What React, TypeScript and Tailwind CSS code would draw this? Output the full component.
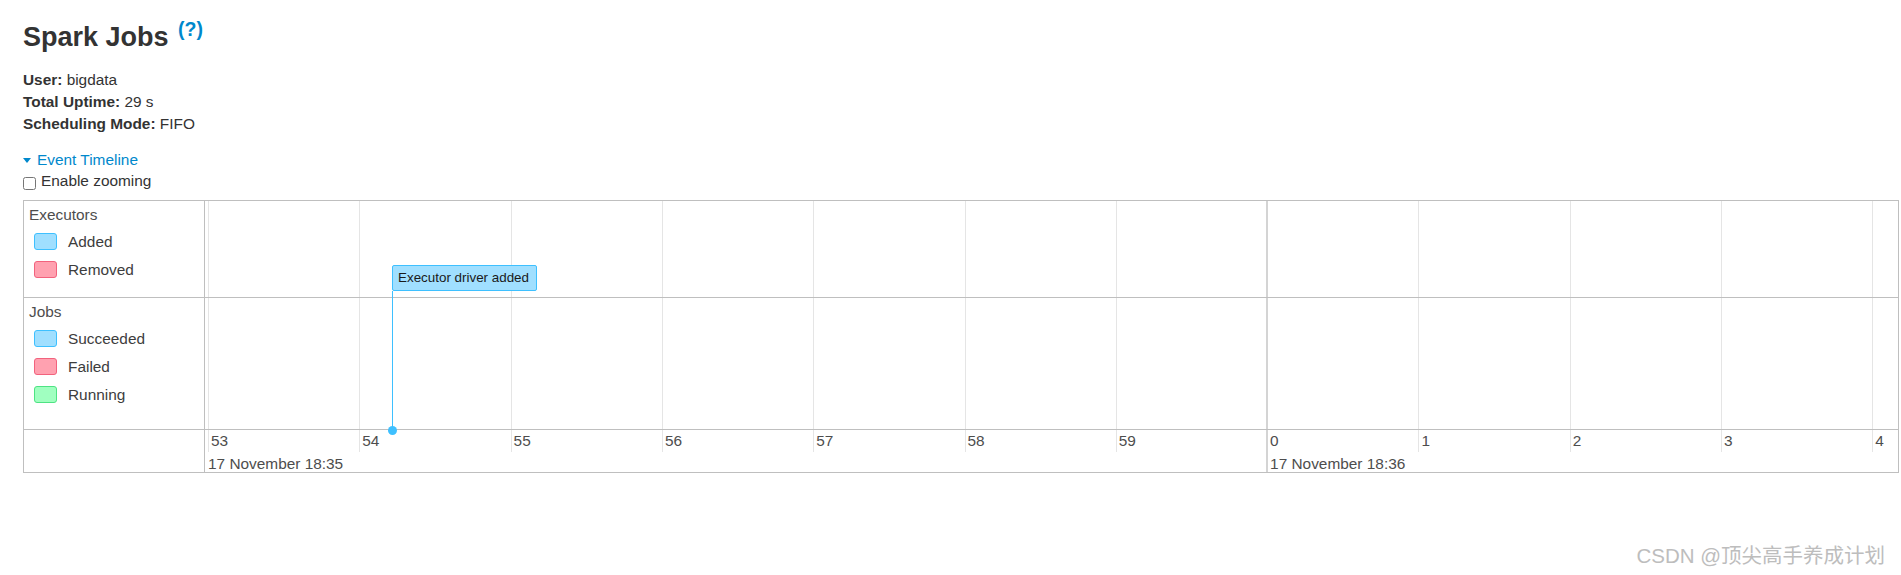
import React from "react";

const ticks = ["53", "54", "55", "56", "57", "58", "59", "0", "1", "2", "3", "4"];
const STEP = 151.3;
const FIRST = 3;

function LegendRow({ label, fill, stroke }: { label: string; fill: string; stroke: string }) {
  return (
    <div className="flex h-[28.3px] items-center">
      <div
        className="ml-[5px] h-[17px] w-[23px] rounded-[3px] border"
        style={{ backgroundColor: fill, borderColor: stroke }}
      />
      <span className="ml-[11px] leading-[17px] text-[#3d3d3d]">{label}</span>
    </div>
  );
}

export default function App() {
  return (
    <div className="relative min-h-[575px] w-full bg-white font-['Liberation_Sans',Arial,sans-serif] text-[#333]">
      <div className="pl-[23px] pt-[20px]">
        <h3 className="h-[30px] whitespace-nowrap text-[27px] font-bold leading-[30px] text-[#333]">
          Spark Jobs{" "}
          <span className="ml-[2px] align-[10px] text-[19.5px] font-bold leading-none text-[#0088cc]">(?)</span>
        </h3>
        <ul className="mt-[19px] text-[15.4px] leading-[22px]">
          <li>
            <strong>User:</strong> bigdata
          </li>
          <li>
            <strong>Total Uptime:</strong> 29 s
          </li>
          <li>
            <strong>Scheduling Mode:</strong> FIFO
          </li>
        </ul>
        <div className="mt-[14px] flex h-[21px] items-center text-[15.4px] leading-[21px] text-[#0088cc]">
          <span className="mt-[2px] h-0 w-0 border-l-[4.5px] border-r-[4.5px] border-t-[5px] border-l-transparent border-r-transparent border-t-[#0088cc]" />
          <span className="ml-[6px]">Event Timeline</span>
        </div>
        <div className="flex h-[21px] items-start text-[15.4px] leading-[21px] text-[#333]">
          <input type="checkbox" className="m-0 mt-[7px] h-[13px] w-[13px]" />
          <span className="ml-[5px]">Enable zooming</span>
        </div>

        <div className="mt-[8.5px] flex w-[1876px] border border-[#bfbfbf] text-[15.4px] text-[#4d4d4d]">
          {/* left panel */}
          <div className="flex w-[181px] shrink-0 flex-col border-r border-[#bfbfbf]">
            <div className="h-[97px] border-b border-[#bfbfbf] px-[5px] pt-[5px]">
              <div className="leading-[17px]">Executors</div>
              <div className="mt-[4.5px]">
                <LegendRow label="Added" fill="#A0DFFF" stroke="#3EC0FF" />
                <LegendRow label="Removed" fill="#FFA1B0" stroke="#F2627D" />
              </div>
            </div>
            <div className="h-[132px] border-b border-[#bfbfbf] px-[5px] pt-[5px]">
              <div className="leading-[17px]">Jobs</div>
              <div className="mt-[4.5px]">
                <LegendRow label="Succeeded" fill="#A0DFFF" stroke="#3EC0FF" />
                <LegendRow label="Failed" fill="#FFA1B0" stroke="#F2627D" />
                <LegendRow label="Running" fill="#A0FFC0" stroke="#4EE383" />
              </div>
            </div>
            <div className="h-[42px]" />
          </div>

          {/* center panel */}
          <div className="relative flex-1 overflow-hidden">
            {ticks.map((t, i) => {
              const x = FIRST + STEP * i;
              const major = t === "0";
              return (
                <React.Fragment key={t}>
                  {major ? (
                    <div
                      className="absolute top-0 h-[271px] w-[2px] bg-[#d4d4d4]"
                      style={{ left: x - 1 }}
                    />
                  ) : (
                    <div
                      className="absolute top-0 h-[251px] w-[1px] bg-[#e5e5e5]"
                      style={{ left: x }}
                    />
                  )}
                  <div
                    className="absolute top-[229px] whitespace-nowrap pt-[2px] leading-[17px]"
                    style={{ left: x + 3 }}
                  >
                    {t}
                  </div>
                </React.Fragment>
              );
            })}
            <div className="absolute left-[3px] top-[252px] whitespace-nowrap pt-[2px] leading-[17px]">
              17 November 18:35
            </div>
            <div
              className="absolute top-[252px] whitespace-nowrap pt-[2px] leading-[17px]"
              style={{ left: FIRST + STEP * 7 + 3 }}
            >
              17 November 18:36
            </div>

            <div className="relative z-10 h-[97px] border-b border-[#bfbfbf]" />
            <div className="relative z-10 h-[132px] border-b border-[#bfbfbf]" />
            <div className="h-[42px]" />

            {/* event item */}
            <div className="absolute left-[187px] top-[90px] z-20 h-[138px] w-[1px] bg-[#3EC0FF]" />
            <div className="absolute left-[183px] top-[225px] z-20 h-[9px] w-[9px] rounded-full bg-[#3EC0FF]" />
            <div className="absolute left-[187px] top-[64px] z-20 whitespace-nowrap rounded-[2px] border border-[#3EC0FF] bg-[#A0DFFF] py-[5px] pl-[5px] pr-[7px] text-[13.4px] leading-[14px] text-[#1a1a1a]">
              Executor driver added
            </div>
          </div>
        </div>
      </div>

      <div className="absolute right-[16px] top-[544px] whitespace-nowrap font-['Liberation_Sans','Noto_Sans_CJK_SC',sans-serif] text-[20.5px] leading-[24px] text-[#bdbdbd]">
        CSDN @顶尖高手养成计划
      </div>
    </div>
  );
}
